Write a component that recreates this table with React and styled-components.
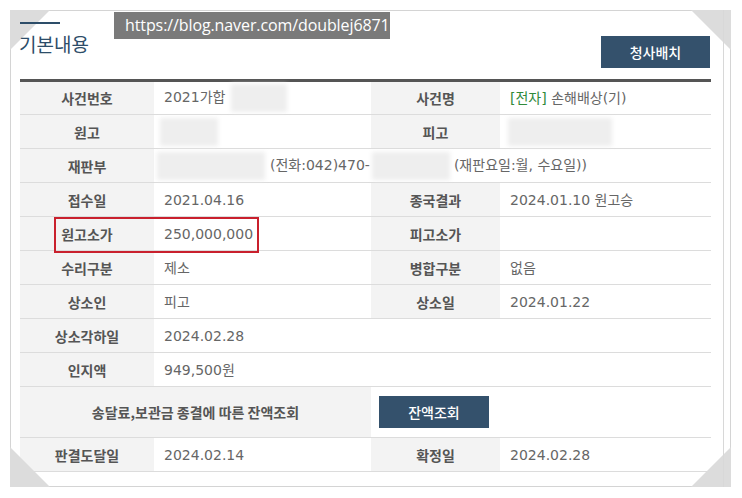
import React from "react";
import styled, { createGlobalStyle } from "styled-components";

const GlobalStyle = createGlobalStyle`
  body {
    margin: 0;
    background: #fff;
    font-family: "Noto Sans CJK KR", "Noto Sans", sans-serif;
  }
`;

const Frame = styled.div`
  position: relative;
  margin: 10px 0 0 10px;
  width: 721px;
  height: 477px;
  box-sizing: border-box;
  border: 1px solid #d4d4d4;
  padding: 11px 20px 0 9px;
  &::after {
    content: "";
    position: absolute;
    top: -1px;
    bottom: -1px;
    right: 6px;
    width: 1px;
    background: #d8d8d8;
  }
`;

const Corner = styled.div`
  position: absolute;
  width: 40px;
  height: 40px;
  background: #dcdcdc;
  ${(p) => p.$pos === "tl" && "top:-1px;left:-1px;clip-path:polygon(0 0,100% 0,0 100%);"}
  ${(p) => p.$pos === "tr" && "top:-1px;right:-1px;clip-path:polygon(0 0,100% 0,100% 100%);"}
  ${(p) => p.$pos === "bl" && "bottom:-1px;left:-1px;clip-path:polygon(0 0,100% 100%,0 100%);"}
  ${(p) => p.$pos === "br" && "bottom:-1px;right:-1px;clip-path:polygon(100% 0,100% 100%,0 100%);"}
`;

const Header = styled.div`
  display: flex;
  justify-content: space-between;
  align-items: flex-end;
  height: 46px;
  padding-bottom: 11px;
  box-sizing: content-box;
`;

// sits above the folded corner
const TitleBlock = styled.div`
  position: relative;
  align-self: flex-start;
  display: flex;
  flex-direction: column;
`;

const TitleBar = styled.div`
  width: 40px;
  height: 2px;
  background: #2d4d69;
  margin-bottom: 8px;
`;

const Title = styled.h2`
  margin: 0 0 0 -1px;
  font-size: 19px;
  line-height: 23px;
  font-weight: 400;
  color: #2d4d69;
`;

const DarkButton = styled.button`
  width: ${(p) => p.$w || 110}px;
  height: 32px;
  border: 0;
  background: #34516c;
  color: #fff;
  font-family: "Noto Sans CJK KR", sans-serif;
  font-size: 14px;
  font-weight: 500;
  padding: 0;
  cursor: pointer;
`;

const Watermark = styled.div`
  position: absolute;
  top: 1px;
  left: 103px;
  width: 276px;
  height: 27px;
  background: #7a7a7a;
  color: #fff;
  font-family: "Open Sans", "Liberation Sans", sans-serif;
  font-size: 16px;
  line-height: 27px;
  padding-left: 11px;
  box-sizing: border-box;
  letter-spacing: -0.1px;
`;

const Table = styled.table`
  width: 691px;
  border-collapse: collapse;
  table-layout: fixed;
  border-top: 3px solid #555;
  font-size: 14px;
`;

const Row = styled.tr`
  height: ${(p) => p.$h || 34}px;
  border-bottom: 1px solid #dcdcdc;
`;

const Label = styled.th`
  background: #f3f3f3;
  color: #555;
  font-weight: 700;
  text-align: center;
  padding: 0;
  line-height: 20px;
`;

const Value = styled.td`
  color: #666;
  font-family: "DejaVu Sans", "Noto Sans CJK KR", sans-serif;
  padding: 0 0 0 10px;
  line-height: 20px;
  white-space: nowrap;
`;

const Green = styled.span`
  color: #2f8a3a;
`;

const Blur = styled.span`
  display: inline-block;
  vertical-align: middle;
  width: ${(p) => p.$w}px;
  height: 28px;
  margin-left: ${(p) => p.$ml || 0}px;
  background: #eeeeee;
  filter: blur(2px);
`;

const Highlight = styled.div`
  position: absolute;
  left: 43px;
  top: 206px;
  width: 205px;
  height: 36px;
  box-sizing: border-box;
  border: 2px solid #c9202d;
`;

export default function App() {
  return (
    <>
      <GlobalStyle />
      <Frame>
        <Corner $pos="tl" />
        <Corner $pos="tr" />
        <Corner $pos="bl" />
        <Corner $pos="br" />
        <Header>
          <TitleBlock>
            <TitleBar />
            <Title>기본내용</Title>
          </TitleBlock>
          <DarkButton $w={109}>청사배치</DarkButton>
        </Header>
        <Watermark>https://blog.naver.com/doublej6871</Watermark>
        <Table>
          <colgroup>
            <col style={{ width: 134 }} />
            <col style={{ width: 217 }} />
            <col style={{ width: 129 }} />
            <col style={{ width: 211 }} />
          </colgroup>
          <tbody>
            <Row>
              <Label>사건번호</Label>
              <Value>2021가합<Blur $w={56} $ml={6} /></Value>
              <Label>사건명</Label>
              <Value><Green>[전자]</Green> 손해배상(기)</Value>
            </Row>
            <Row>
              <Label>원고</Label>
              <Value style={{ paddingLeft: 6 }}><Blur $w={58} /></Value>
              <Label>피고</Label>
              <Value style={{ paddingLeft: 8 }}><Blur $w={104} /></Value>
            </Row>
            <Row>
              <Label>재판부</Label>
              <Value colSpan={3} style={{ paddingLeft: 3 }}>
                <Blur $w={108} />
                <span style={{ marginLeft: 5 }}>(전화:042)470-</span>
                <Blur $w={78} $ml={2} />
                <span style={{ marginLeft: 4 }}>(재판요일:월, 수요일))</span>
              </Value>
            </Row>
            <Row>
              <Label>접수일</Label>
              <Value>2021.04.16</Value>
              <Label>종국결과</Label>
              <Value>2024.01.10 원고승</Value>
            </Row>
            <Row>
              <Label>원고소가</Label>
              <Value>250,000,000</Value>
              <Label>피고소가</Label>
              <Value />
            </Row>
            <Row>
              <Label>수리구분</Label>
              <Value>제소</Value>
              <Label>병합구분</Label>
              <Value>없음</Value>
            </Row>
            <Row>
              <Label>상소인</Label>
              <Value>피고</Value>
              <Label>상소일</Label>
              <Value>2024.01.22</Value>
            </Row>
            <Row>
              <Label>상소각하일</Label>
              <Value colSpan={3}>2024.02.28</Value>
            </Row>
            <Row>
              <Label>인지액</Label>
              <Value colSpan={3}>949,500원</Value>
            </Row>
            <Row $h={51}>
              <Label colSpan={2}>송달료,보관금 종결에 따른 잔액조회</Label>
              <Value colSpan={2} style={{ paddingLeft: 8 }}>
                <DarkButton $w={110}>잔액조회</DarkButton>
              </Value>
            </Row>
            <Row>
              <Label>판결도달일</Label>
              <Value>2024.02.14</Value>
              <Label>확정일</Label>
              <Value>2024.02.28</Value>
            </Row>
          </tbody>
        </Table>
        <Highlight />
      </Frame>
    </>
  );
}
